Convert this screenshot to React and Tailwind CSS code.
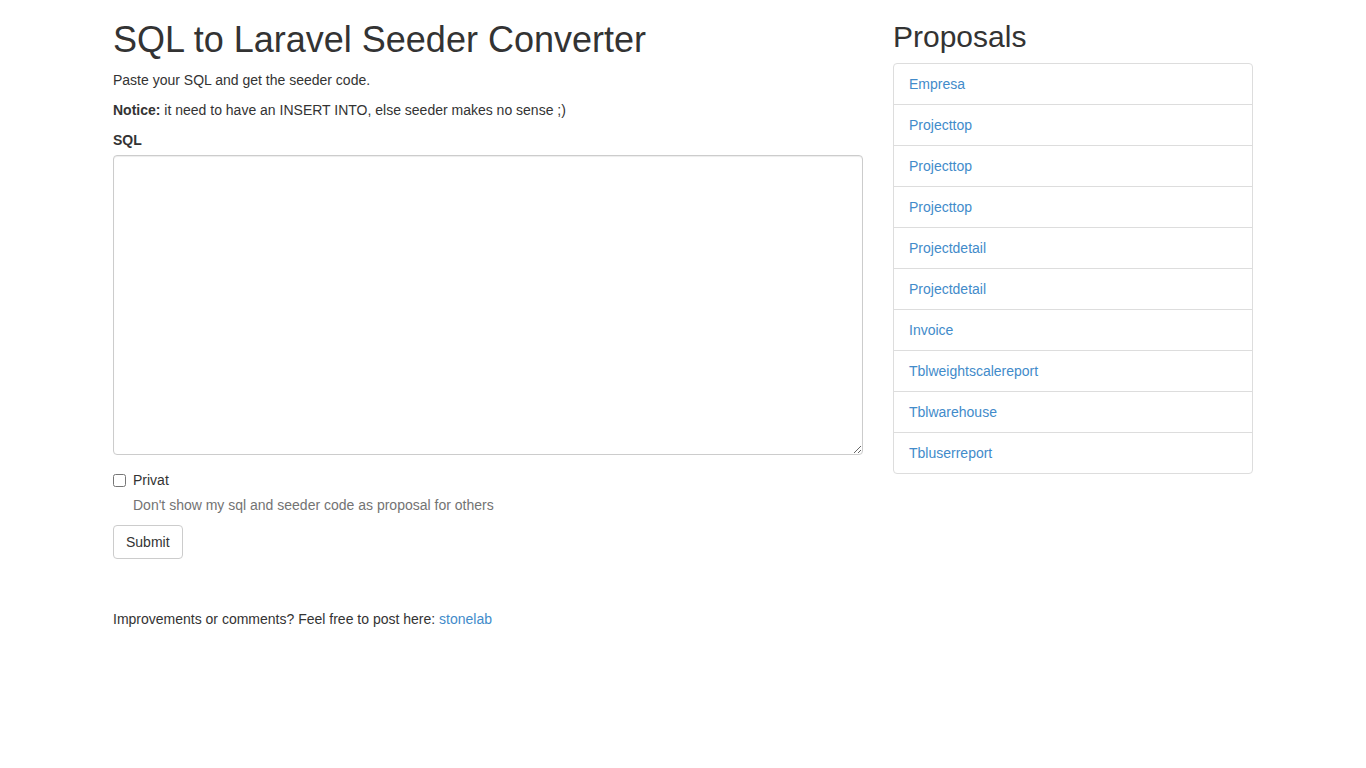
import React from "react";

const proposals = [
  "Empresa",
  "Projecttop",
  "Projecttop",
  "Projecttop",
  "Projectdetail",
  "Projectdetail",
  "Invoice",
  "Tblweightscalereport",
  "Tblwarehouse",
  "Tbluserreport",
];

export default function App() {
  return (
    <div
      className="min-h-screen bg-white text-[#333] text-[14px] leading-[20px]"
      style={{ fontFamily: '"Liberation Sans", Arial, sans-serif' }}
    >
      <div className="mx-auto w-[1170px] px-[15px]">
        <div className="flex gap-[30px]">
          <div className="w-[750px]">
            <h1 className="mt-[20px] mb-[10px] text-[36px] leading-[39.6px] font-medium">
              SQL to Laravel Seeder Converter
            </h1>
            <p className="mb-[10px]">Paste your SQL and get the seeder code.</p>
            <p className="mb-[10px]">
              <strong className="font-bold">Notice:</strong> it need to have an INSERT INTO, else seeder makes no sense ;)
            </p>
            <div className="mb-[15px]">
              <label className="block font-bold mb-[5px]">SQL</label>
              <textarea
                className="block w-full h-[300px] border border-[#ccc] rounded-[4px] px-[12px] py-[6px] shadow-[inset_0_1px_1px_rgba(0,0,0,0.075)] resize-y outline-none"
              />
            </div>
            <div className="mb-[10px]">
              <label className="flex items-start">
                <input type="checkbox" className="m-0 mt-[4px] mr-[7px] w-[13px] h-[13px]" />
                <span>Privat</span>
              </label>
              <p className="pl-[20px] mt-[5px] mb-[10px] text-[#737373]">
                Don't show my sql and seeder code as proposal for others
              </p>
            </div>
            <button className="h-[34px] px-[12px] border border-[#ccc] rounded-[4px] bg-white text-[#333] text-[14px] leading-[20px]">
              Submit
            </button>
          </div>
          <div className="w-[360px]">
            <h2 className="mt-[20px] mb-[10px] text-[30px] leading-[33px] font-medium">Proposals</h2>
            <div className="mb-[20px] flex flex-col">
              {proposals.map((p, i) => (
                <a
                  key={i}
                  href="#"
                  className={`block px-[15px] py-[10px] border border-[#ddd] text-[#428bca] ${
                    i > 0 ? "-mt-px" : "rounded-t-[4px]"
                  } ${i === proposals.length - 1 ? "rounded-b-[4px]" : ""}`}
                >
                  {p}
                </a>
              ))}
            </div>
          </div>
        </div>
        <p className="mt-[50px]">
          Improvements or comments? Feel free to post here:{" "}
          <a href="#" className="text-[#428bca]">stonelab</a>
        </p>
      </div>
    </div>
  );
}
